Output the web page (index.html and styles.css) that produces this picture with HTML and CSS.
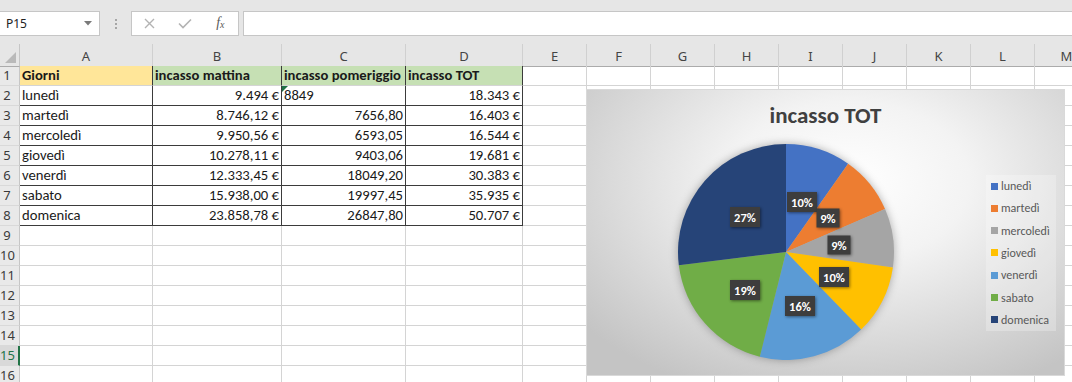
FILE: index.html
```html
<!DOCTYPE html>
<html lang="it">
<head>
  <meta charset="UTF-8">
  <title>Incassi settimana</title>
  <link rel="stylesheet" href="styles.css">
</head>
<body>
  <div class="formula-bar">
    <div class="name-box">
      <span>P15</span>
      <svg class="drop" width="8" height="5" viewBox="0 0 8 5"><path d="M0 0 L8 0 L4 4.5 Z" fill="#7a7a7a"/></svg>
    </div>
    <div class="grip"><i></i><i></i><i></i></div>
    <div class="fx-box">
      <span class="fx-btn">
        <svg width="11" height="11" viewBox="0 0 11 11"><path d="M1 1 L10 10 M10 1 L1 10" stroke="#b3b3b3" stroke-width="1.4"/></svg>
      </span>
      <span class="fx-btn">
        <svg width="14" height="11" viewBox="0 0 14 11"><path d="M1 5.5 L5 9.5 L13 1.5" stroke="#b3b3b3" stroke-width="1.6" fill="none"/></svg>
      </span>
      <span class="fx-btn fx">f<small>x</small></span>
    </div>
    <div class="formula-input"></div>
  </div>

  <div class="sheet">
    <div class="row head">
      <div class="corner"><span class="tri"></span></div>
      <div class="ch">A</div><div class="ch">B</div><div class="ch">C</div><div class="ch">D</div>
      <div class="ch">E</div><div class="ch">F</div><div class="ch">G</div><div class="ch">H</div>
      <div class="ch">I</div><div class="ch">J</div><div class="ch">K</div><div class="ch">L</div>
      <div class="ch">M</div>
    </div>

    <div class="row">
      <div class="rh">1</div>
      <div class="c b yellow">Giorni</div>
      <div class="c b green">incasso mattina</div>
      <div class="c b green">incasso pomeriggio</div>
      <div class="c b green">incasso TOT</div>
      <div class="rest"></div>
    </div>
    <div class="row">
      <div class="rh">2</div>
      <div class="c t">lunedì</div>
      <div class="c t num">9.494 €</div>
      <div class="c t txt-num">8849</div>
      <div class="c t num">18.343 €</div>
      <div class="rest"></div>
    </div>
    <div class="row">
      <div class="rh">3</div>
      <div class="c t">martedì</div>
      <div class="c t num">8.746,12 €</div>
      <div class="c t num">7656,80</div>
      <div class="c t num">16.403 €</div>
      <div class="rest"></div>
    </div>
    <div class="row">
      <div class="rh">4</div>
      <div class="c t">mercoledì</div>
      <div class="c t num">9.950,56 €</div>
      <div class="c t num">6593,05</div>
      <div class="c t num">16.544 €</div>
      <div class="rest"></div>
    </div>
    <div class="row">
      <div class="rh">5</div>
      <div class="c t">giovedì</div>
      <div class="c t num">10.278,11 €</div>
      <div class="c t num">9403,06</div>
      <div class="c t num">19.681 €</div>
      <div class="rest"></div>
    </div>
    <div class="row">
      <div class="rh">6</div>
      <div class="c t">venerdì</div>
      <div class="c t num">12.333,45 €</div>
      <div class="c t num">18049,20</div>
      <div class="c t num">30.383 €</div>
      <div class="rest"></div>
    </div>
    <div class="row">
      <div class="rh">7</div>
      <div class="c t">sabato</div>
      <div class="c t num">15.938,00 €</div>
      <div class="c t num">19997,45</div>
      <div class="c t num">35.935 €</div>
      <div class="rest"></div>
    </div>
    <div class="row">
      <div class="rh">8</div>
      <div class="c t">domenica</div>
      <div class="c t num">23.858,78 €</div>
      <div class="c t num">26847,80</div>
      <div class="c t num">50.707 €</div>
      <div class="rest"></div>
    </div>
    <div class="row"><div class="rh">9</div><div class="c"></div><div class="c"></div><div class="c"></div><div class="c"></div><div class="rest"></div></div>
    <div class="row"><div class="rh">10</div><div class="c"></div><div class="c"></div><div class="c"></div><div class="c"></div><div class="rest"></div></div>
    <div class="row"><div class="rh">11</div><div class="c"></div><div class="c"></div><div class="c"></div><div class="c"></div><div class="rest"></div></div>
    <div class="row"><div class="rh">12</div><div class="c"></div><div class="c"></div><div class="c"></div><div class="c"></div><div class="rest"></div></div>
    <div class="row"><div class="rh">13</div><div class="c"></div><div class="c"></div><div class="c"></div><div class="c"></div><div class="rest"></div></div>
    <div class="row"><div class="rh">14</div><div class="c"></div><div class="c"></div><div class="c"></div><div class="c"></div><div class="rest"></div></div>
    <div class="row"><div class="rh sel">15</div><div class="c"></div><div class="c"></div><div class="c"></div><div class="c"></div><div class="rest"></div></div>
    <div class="row"><div class="rh">16</div><div class="c"></div><div class="c"></div><div class="c"></div><div class="c"></div><div class="rest"></div></div>

    <!-- grafico a torta sopra il foglio -->
    <div class="chart">
      <div class="chart-title">incasso TOT</div>
      <div class="chart-body">
        <svg class="pie" width="236" height="236" viewBox="0 0 236 236">
          <g class="slices">
            <path d="M118 118 L118 10 A108 108 0 0 1 180.14 29.67 Z" fill="#4472c4"/>
            <path d="M118 118 L180.14 29.67 A108 108 0 0 1 217.07 74.99 Z" fill="#ed7d31"/>
            <path d="M118 118 L217.07 74.99 A108 108 0 0 1 224.89 133.44 Z" fill="#a5a5a5"/>
            <path d="M118 118 L224.89 133.44 A108 108 0 0 1 193.15 195.56 Z" fill="#ffc000"/>
            <path d="M118 118 L193.15 195.56 A108 108 0 0 1 91.72 222.75 Z" fill="#5b9bd5"/>
            <path d="M118 118 L91.72 222.75 A108 108 0 0 1 10.83 131.35 Z" fill="#70ad47"/>
            <path d="M118 118 L10.83 131.35 A108 108 0 0 1 118 10 Z" fill="#264478"/>
          </g>
          <g class="labels">
            <rect x="119" y="58" width="30" height="20"/><text x="134" y="68">10%</text>
            <rect x="148.5" y="74.5" width="23" height="19"/><text x="160" y="84">9%</text>
            <rect x="159.5" y="101.5" width="23" height="19"/><text x="171" y="111">9%</text>
            <rect x="151" y="133" width="30" height="20"/><text x="166" y="143">10%</text>
            <rect x="117" y="162" width="30" height="20"/><text x="132" y="172">16%</text>
            <rect x="62" y="146" width="30" height="20"/><text x="77" y="156">19%</text>
            <rect x="62" y="73" width="30" height="20"/><text x="77" y="83">27%</text>
          </g>
        </svg>
        <ul class="legend">
          <li><span class="key" style="background:#4472c4"></span>lunedì</li>
          <li><span class="key" style="background:#ed7d31"></span>martedì</li>
          <li><span class="key" style="background:#a5a5a5"></span>mercoledì</li>
          <li><span class="key" style="background:#ffc000"></span>giovedì</li>
          <li><span class="key" style="background:#5b9bd5"></span>venerdì</li>
          <li><span class="key" style="background:#70ad47"></span>sabato</li>
          <li><span class="key" style="background:#264478"></span>domenica</li>
        </ul>
      </div>
    </div>
  </div>
</body>
</html>
```

FILE: styles.css
```css
* {
  box-sizing: border-box;
}

body {
  margin: 0;
  width: 1072px;
  height: 382px;
  overflow: hidden;
  background: #fff;
  font-family: 'Carlito', 'Lato', sans-serif;
  color: #1a1a1a;
}

/* barra della formula */
.formula-bar {
  display: flex;
  align-items: flex-start;
  height: 44px;
  padding-top: 11px;
  background: #e6e6e6;
  font-family: 'Noto Sans', sans-serif;
}

.name-box {
  width: 100px;
  height: 25px;
  background: #fff;
  border: 1px solid #c6c6c6;
  border-left: none;
  display: flex;
  align-items: center;
  justify-content: space-between;
  padding: 0 7px 0 6px;
  font-size: 12px;
  color: #222;
}

.grip {
  width: 31px;
  height: 25px;
  display: flex;
  flex-direction: column;
  align-items: center;
  justify-content: center;
  gap: 2px;
}

.grip i {
  width: 2px;
  height: 2px;
  background: #a6a6a6;
}

.fx-box {
  width: 108px;
  height: 25px;
  background: #fff;
  border: 1px solid #c6c6c6;
  display: flex;
}

.fx-btn {
  flex: 1;
  display: flex;
  align-items: center;
  justify-content: center;
}

.fx {
  font-family: 'Liberation Serif', serif;
  font-style: italic;
  font-size: 14px;
  color: #5a5a5a;
  padding-bottom: 2px;
}

.fx small {
  font-size: 10px;
  margin-top: 4px;
}

.formula-input {
  flex: 1;
  height: 25px;
  margin-left: 4px;
  background: #fff;
  border: 1px solid #c6c6c6;
  border-right: none;
}

/* foglio */
.sheet {
  position: relative;
}

.row {
  display: grid;
  grid-template-columns: 20px 133px 129px 124px 117px repeat(9, 64px);
  height: 20px;
}

.row.head {
  height: 22px;
  background: #e6e6e6;
}

.corner {
  position: relative;
  border-right: 1px solid #c6c6c6;
  border-bottom: 1px solid #ababab;
}

.tri {
  position: absolute;
  right: 3px;
  bottom: 3px;
  border-left: 11px solid transparent;
  border-bottom: 11px solid #b9b9b9;
}

.ch {
  border-right: 1px solid #d0d0d0;
  border-bottom: 1px solid #ababab;
  font-family: 'Noto Sans', sans-serif;
  font-size: 13px;
  color: #444;
  text-align: center;
  line-height: 19px;
  padding-top: 3px;
}

.rh {
  background: #e9e9e9;
  border-right: 1px solid #c6c6c6;
  border-bottom: 1px solid #d9d9d9;
  font-family: 'Noto Sans', sans-serif;
  font-size: 13px;
  color: #3a3a3a;
  text-align: center;
  padding-right: 5px;
  line-height: 19px;
}

.rh.sel {
  background: #d9d9d9;
  color: #217346;
  border-right: 2px solid #217346;
}

.c {
  position: relative;
  border-right: 1px solid #d4d4d4;
  border-bottom: 1px solid #d4d4d4;
  padding: 0 2px;
  font-size: 14.67px;
  line-height: 19px;
  white-space: nowrap;
  overflow: hidden;
}

.c.b {
  font-weight: bold;
  border-right-color: #3b3b3b;
}

.c.t {
  border-right-color: #3b3b3b;
  border-bottom-color: #3b3b3b;
}

.yellow {
  background: #ffe699;
}

.green {
  background: #c6e0b4;
}

.num {
  text-align: right;
}

/* numero memorizzato come testo */
.txt-num::before {
  content: '';
  position: absolute;
  left: 0;
  top: 0;
  border-top: 6px solid #1e7145;
  border-right: 6px solid transparent;
}

.rest {
  grid-column: 6 / -1;
  border-bottom: 1px solid #d4d4d4;
  background: repeating-linear-gradient(90deg, transparent 0 63px, #d4d4d4 63px 64px);
}

/* grafico */
.chart {
  position: absolute;
  left: 586px;
  top: 45px;
  width: 479px;
  height: 287px;
  border: 1px solid #d9d9d9;
  background: radial-gradient(ellipse 72% 80% at 55% 32%, #ffffff 0%, #f3f3f3 35%, #c4c4c4 100%);
  font-family: 'Carlito', 'Lato', sans-serif;
}

.chart-title {
  text-align: center;
  font-size: 23px;
  font-weight: bold;
  color: #404040;
  height: 44px;
  padding-top: 11px;
  line-height: 28px;
}

.chart-body {
  display: flex;
  align-items: flex-start;
  padding-left: 81px;
}

.pie .slices {
  filter: drop-shadow(0 0 4px rgba(0, 0, 0, 0.3));
}

.pie rect {
  fill: #3d3d3d;
  filter: drop-shadow(1px 1px 1.5px rgba(0, 0, 0, 0.45));
}

.pie text {
  fill: #fff;
  font-family: 'Carlito', 'Lato', sans-serif;
  font-weight: bold;
  font-size: 12.5px;
  text-anchor: middle;
  dominant-baseline: central;
}

.legend {
  list-style: none;
  margin: 41px 0 0 82px;
  padding: 0 5px;
  width: 70px;
  height: 156px;
  background: rgba(255, 255, 255, 0.25);
  display: flex;
  flex-direction: column;
  justify-content: space-around;
  font-size: 12px;
  color: #595959;
}

.legend li {
  display: flex;
  align-items: center;
  gap: 3px;
  white-space: nowrap;
}

.key {
  width: 7px;
  height: 7px;
}
```
